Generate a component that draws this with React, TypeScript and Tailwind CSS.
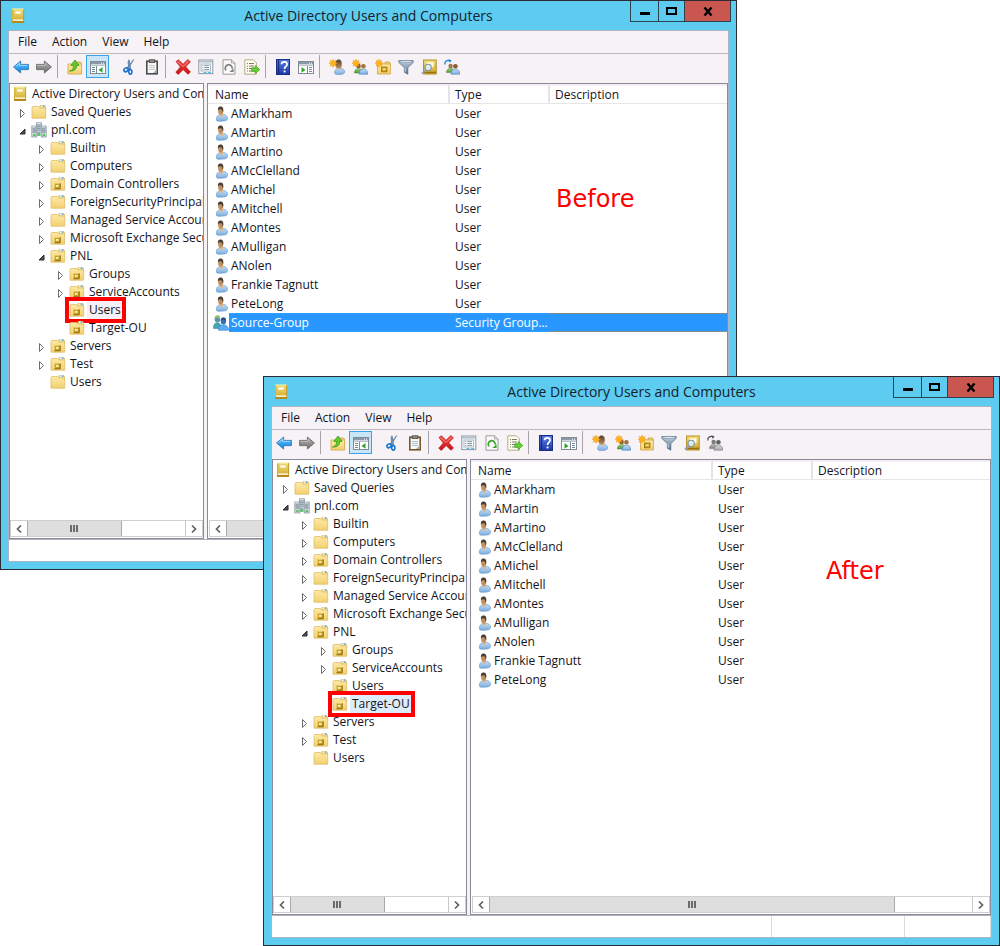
import { Fragment, type ReactNode } from "react";

type IconProps = { className?: string };

function Svg({ children, className = "" }: { children: ReactNode; className?: string }) {
  return (
    <svg viewBox="0 0 16 16" width="16" height="16" aria-hidden="true" className={`block shrink-0 ${className}`}>
      {children}
    </svg>
  );
}

function Gradients() {
  const stops: [string, string, string][] = [
    ["gBlue", "#6ecbff", "#0a7fe0"],
    ["gGrey", "#b4b4b4", "#6f6f6f"],
    ["gFolder", "#fdeaa6", "#f3d071"],
    ["gGold", "#f3df7c", "#d0a526"],
    ["gRed", "#f4504c", "#c80f12"],
    ["gHelp", "#5b7fe6", "#1b38a8"],
    ["gBody", "#c3def8", "#7badde"],
    ["gGreen", "#9fd07a", "#4f9440"],
    ["gSteel", "#c5d3de", "#4f6c85"],
    ["gHead", "#4a3a2c", "#c08f5c"],
  ];
  return (
    <svg width="0" height="0" aria-hidden="true" className="absolute">
      <defs>
        {stops.map(([id, a, b]) => (
          <linearGradient key={id} id={id} x1="0" y1="0" x2="0" y2="1">
            <stop offset="0" stopColor={a} />
            <stop offset="1" stopColor={b} />
          </linearGradient>
        ))}
      </defs>
    </svg>
  );
}

const ConsoleBook = ({ className }: IconProps) => (
  <Svg className={className}>
    <rect x="2" y="1" width="12" height="14" fill="url(#gGold)" />
    <rect x="2" y="1" width="1.500" height="11" fill="#d6b53c" />
    <path d="M2 1h12" stroke="#fbf0a8" strokeWidth="1" />
    <rect x="5" y="3" width="6" height="3" fill="#fffef2" stroke="#e0c65c" strokeWidth=".6" />
    <rect x="3" y="11.400" width="11" height="1.500" fill="#f9f5e0" />
    <rect x="2" y="13" width="12" height="2" fill="#b58a16" />
    <path d="M13.600 1v14" stroke="#b58f22" strokeWidth=".8" />
  </Svg>
);

function Folder({ unit = false }: { unit?: boolean }) {
  return (
    <Svg>
      <path d="M9 1.500h4.600l.9 1v3H9z" fill="#f6dc8c" stroke="#dcb963" strokeWidth=".8" />
      <path d="M1 3.400l.7-.9h6l1 1.500h6v10.200H1z" fill="url(#gFolder)" stroke="#e0bd68" strokeWidth=".8" />
      <rect x="10.200" y="1.400" width="3" height="1.500" fill="#fff" />
      <rect x="11.600" y="1.400" width="1.800" height="1.500" fill="#4aa3e8" />
      {unit && (
        <>
          <path d="M4 7h6.500v6H4z" fill="#c9a12a" />
          <path d="M4.400 13V7.400h6" fill="none" stroke="#f3dc82" strokeWidth=".8" />
          <path d="M10.200 7.400v5.400H4.400" fill="none" stroke="#86680f" strokeWidth=".9" />
          <rect x="6" y="9" width="2.600" height="1.800" fill="#fff3ae" />
        </>
      )}
    </Svg>
  );
}

const Domain = () => (
  <Svg>
    {[
      [5.4, 0.8],
      [0.8, 4],
      [10.2, 4],
    ].map(([x, y]) => (
      <g key={x}>
        <rect x={x} y={y} width="5" height={y < 2 ? 8 : 11} fill="#cdd7de" stroke="#82909b" strokeWidth=".7" />
        <path d={`M${x + 0.8} ${y + 2}h3.4M${x + 0.8} ${y + 4}h3.4M${x + 0.8} ${y + 6}h3.4`} stroke="#5f7382" strokeWidth=".9" />
        <path d={`M${x + 0.6} ${y + 1}h3`} stroke="#f5f9fb" strokeWidth=".8" />
      </g>
    ))}
    <rect x="6" y="9.400" width="3.600" height="4.600" fill="#9dafbb" />
    <path d="M2.200 13.200h2.400M6.800 12.400h2.400M11.600 13.200h2.400" stroke="#3fce3c" strokeWidth="1.800" />
  </Svg>
);

const UserIcon = () => (
  <Svg>
    <path d="M4 15c-1-.8-.8-3.600.4-5 1-1 2-1.200 3-1.500l2.600-.3c2.400.3 4.200 1.600 4.500 3.400.2 1.800-.7 2.800-2 3.100-2.300.5-6.300.7-8.500.3z" fill="url(#gBody)" stroke="#6a9dce" strokeWidth=".7" />
    <path d="M6.800 7.800h3.200l-.4 3-1.500.4-1.300-1.500z" fill="#e0b483" />
    <ellipse cx="7.600" cy="4.800" rx="2.500" ry="4" fill="#c2905c" />
    <path d="M5 4.600C4.400 1.900 5.600.4 7.600.4s3.200 1.600 2.700 4.800L9.800 7C9.400 5.600 9.400 3.800 8 3.300 6.600 3 5.800 3.200 5 4.600z" fill="#4a3f37" />
  </Svg>
);

const GroupIcon = () => (
  <Svg>
    <ellipse cx="4.400" cy="4" rx="2.800" ry="3.600" fill="#5d93b3" />
    <path d="M2 3.600C2 1.200 3.600.4 5 .6s2.600 1.400 2 3.400L4.800 2.800z" fill="#8ac45c" />
    <path d="M.6 13.400c-.6-3.200 1-5.400 3.400-5.600 2.600 0 4.400 1.800 4.600 5.600z" fill="#4aa6ae" stroke="#3b8894" strokeWidth=".6" />
    <ellipse cx="10.400" cy="6" rx="2.700" ry="3.500" fill="#3b70ae" />
    <path d="M7.800 5.600c0-2.600 1.600-3.200 3-3s2.600 1.400 2 3.400l-2.200-1.200z" fill="#2c4f86" />
    <path d="M5.600 15.200c-.6-3.200 1.600-5.200 4.400-5.400 3 0 5.400 1.600 5.600 5.400z" fill="#5aaef7" stroke="#2f7fd0" strokeWidth=".6" />
  </Svg>
);

const Star = () => (
  <path d="M4 0l.9 2.300L7 1.200 6.100 3.400 8.400 4.200 6.100 5 7 7.200 4.900 6.200 4 8.400 3.100 6.200 1 7.200 1.900 5-.2 4.200 1.900 3.400 1 1.200l2.100 1.100z" fill="#ffb21c" stroke="#ee9208" strokeWidth=".4" />
);

const BackArrow = () => (
  <Svg>
    <path d="M.6 8l7-6v3.400h7.800v5.200H7.600V14z" fill="url(#gBlue)" stroke="#2d78b5" strokeWidth=".9" strokeLinejoin="round" />
    <path d="M2.600 7.600l4-3.400v2.200h7.600" fill="none" stroke="#b5e4ff" strokeWidth=".8" />
  </Svg>
);
const ForwardArrow = () => (
  <Svg>
    <path d="M15.400 8l-7-6v3.400H.6v5.200h7.800V14z" fill="url(#gGrey)" stroke="#666" strokeWidth=".9" strokeLinejoin="round" />
    <path d="M1.400 6.400h7.800V4.200" fill="none" stroke="#d0d0d0" strokeWidth=".7" />
  </Svg>
);
const FolderUp = () => (
  <Svg>
    <path d="M9 3h4.500l1 1.200V7H9z" fill="#f3d67d" stroke="#c9a040" strokeWidth=".8" />
    <path d="M1 5h13.600v10H1z" fill="url(#gFolder)" stroke="#cfa544" strokeWidth=".8" />
    <path d="M2.500 12c3.200-.6 4.300-3 3.900-5.600H3.800L8 1l4 5.400H9.600C9.900 9.800 7 12.600 2.500 12z" fill="#5fca2c" stroke="#3b9a1c" strokeWidth=".8" strokeLinejoin="round" />
  </Svg>
);
const TreePane = ({ right = false }: { right?: boolean }) => (
  <Svg>
    <rect x=".5" y="2.500" width="15" height="12" fill="#fff" stroke="#7f8b96" />
    <rect x="1" y="3" width="14" height="2.400" fill="#8999a8" />
    <path d="M11 4.200h1M13 4.200h1" stroke="#fff" />
    <path d="M1 6.500h14" stroke="#b9c3cc" />
    {right ? (
      <>
        <path d="M9.500 7v7.500" stroke="#7f8b96" />
        <path d="M11 8.500h3M11 10.500h3M11 12.500h3" stroke="#71879c" />
        <path d="M3.500 8l4 2.900-4 2.900z" fill="#2fa52a" />
      </>
    ) : (
      <>
        <path d="M6.500 7v7.500" stroke="#7f8b96" />
        <path d="M2 8.500h3M2 10.500h3M2 12.500h3" stroke="#71879c" />
        <path d="M12.500 8l-4 2.900 4 2.900z" fill="#2fa52a" />
      </>
    )}
  </Svg>
);
const Scissors = () => (
  <Svg>
    <path d="M12.600.6L7.400 9.600l-1.600-.4z" fill="#bcd4ea" stroke="#507aa5" strokeWidth=".8" />
    <path d="M8 .8l1.600 8.800-1.500.5L7 3z" fill="#8aa9c6" stroke="#45688c" strokeWidth=".7" />
    <ellipse cx="5" cy="10.800" rx="2.200" ry="1.800" fill="none" stroke="#1673cf" strokeWidth="1.600" transform="rotate(-35 5 10.800)" />
    <ellipse cx="9.300" cy="12.800" rx="1.600" ry="2.300" fill="none" stroke="#1673cf" strokeWidth="1.600" />
  </Svg>
);
const Clipboard = ({ edge, lines }: { edge: string; lines: string }) => (
  <Svg>
    <rect x="2.800" y="2.200" width="10.400" height="12.600" fill="#f8f8f8" stroke={edge} strokeWidth="1.600" />
    <rect x="5.200" y=".8" width="5.600" height="2.800" fill="#8d8d8d" stroke="#474747" strokeWidth=".8" />
    <path d="M5 6.500h6M5 8.500h6M5 10.500h6" stroke={lines} />
    <path d="M9 14l3.500-3.500V14z" fill="#a5adb5" />
  </Svg>
);
const DeleteX = () => (
  <Svg>
    <path d="M1 2.600L3.400.8 8 5.300 12.800.6 15.400 2.800 10.700 7.800 15.400 13 13 15.200 8.100 10.600 3.200 15.400.8 13.200 5.400 8z" fill="url(#gRed)" stroke="#b51015" strokeWidth=".7" strokeLinejoin="round" />
    <path d="M2.300 2.700L8 7.400l5.500-5" fill="none" stroke="#ff9d97" strokeWidth=".8" />
  </Svg>
);
const Properties = () => (
  <Svg>
    <rect x=".8" y="1" width="14" height="13.600" fill="#f7fafc" stroke="#8b98a3" />
    <path d="M1 2.800h13.600" stroke="#a9b8c4" strokeWidth="1.400" />
    <rect x="3" y="5" width="9.500" height="7" fill="#fff" stroke="#9aa8b4" strokeWidth=".8" />
    <path d="M4.300 6.600h1M6.300 6.600H11M4.300 8.500h1M6.300 8.500H11M4.300 10.400h1M6.300 10.400H11" stroke="#71879c" strokeWidth=".9" />
    <path d="M5.500 13.500h3M10 13.500h3" stroke="#4cc3ea" />
  </Svg>
);
const Refresh = ({ green = false }: { green?: boolean }) => {
  const tone = green ? "#3ba52c" : "#808080";
  return (
    <Svg>
      <path d="M2 .8h8.600L14 4v11.200H2z" fill="#fafafa" stroke="#9b9b9b" />
      <path d="M10.500.8V4H14" fill="#e2e2e2" stroke="#9b9b9b" strokeWidth=".8" />
      <path d="M5 11.400A3.500 3.500 0 1 1 11.200 9.600" fill="none" stroke={tone} strokeWidth="1.700" />
      <path d="M12.600 9.200v3.800H8.400z" fill={tone} />
    </Svg>
  );
};
const ExportList = () => (
  <Svg>
    <path d="M.8.8h8.600l3 3v11.400H.8z" fill="#fffdf0" stroke="#b5ab88" />
    <path d="M3 4.500h1M5 4.500h5M3 7h1M5 7h5M3 9.500h1M5 9.500h3M3 12h1M5 12h3" stroke="#7c7b6b" />
    <path d="M7.800 8.800h3.400V6.600L15.800 10.600 11.200 14.600v-2.200H7.800z" fill="#62cf31" stroke="#3d9c1d" strokeWidth=".7" />
  </Svg>
);
const HelpBook = () => (
  <Svg>
    <rect x="1.500" y=".5" width="13" height="15" fill="url(#gHelp)" stroke="#1b2e86" />
    <path d="M3.500 1v14" stroke="#16297c" strokeWidth="1.200" />
    <path d="M6.500 5.200c.2-3.200 5.600-3.200 5.600.1 0 2.100-2.600 2.300-2.600 4.600" fill="none" stroke="#fff" strokeWidth="1.700" />
    <rect x="8.600" y="11.500" width="1.900" height="1.900" fill="#fff" />
  </Svg>
);
const NewUser = () => (
  <Svg>
    <path d="M6 14.800c-1-1.200 0-4.600 2.400-5.600l3.200-.2c2.600.6 4 2.200 4 4 0 1.900-3.200 2.600-5.600 2.600-2 0-3.400-.2-4-.8z" fill="url(#gBody)" stroke="#6a9dce" strokeWidth=".7" />
    <path d="M8.400 8.500h3.200l-.6 3-1.600-1z" fill="#e0b483" />
    <ellipse cx="9.600" cy="4.900" rx="3.200" ry="4.500" fill="url(#gHead)" />
    <Star />
  </Svg>
);
const NewGroup = () => (
  <Svg>
    <circle cx="6.600" cy="7" r="2.200" fill="#8a5d33" />
    <path d="M2.400 14c0-3 1.800-4.600 4.200-4.600S10.800 11 10.800 14z" fill="url(#gGreen)" stroke="#4b8a3c" strokeWidth=".5" />
    <circle cx="11.400" cy="7.200" r="2.300" fill="#a8713f" />
    <path d="M7 15.200c0-3.400 1.800-5.200 4.400-5.200s4.400 1.800 4.400 5.200z" fill="url(#gBody)" stroke="#4f86bd" strokeWidth=".6" />
    <Star />
  </Svg>
);
const NewUnit = () => (
  <Svg>
    <path d="M10 3h4.600l.8 1.500V7H10z" fill="#f3d67d" stroke="#c9a040" strokeWidth=".8" />
    <path d="M2.500 5h12.900v10H2.500z" fill="url(#gFolder)" stroke="#cfa544" strokeWidth=".8" />
    <rect x="6.500" y="8" width="5.500" height="4.800" fill="#d2a41c" stroke="#96700c" strokeWidth=".8" />
    <rect x="7.800" y="9.600" width="3" height="1.200" fill="#fff2ac" />
    <Star />
  </Svg>
);
const Filter = () => (
  <Svg>
    <path d="M.8 1.600h14.400v1.800L9.800 8.600v6.600l-3.400-2V8.600L.8 3.400z" fill="url(#gSteel)" stroke="#54708a" strokeWidth=".8" />
    <ellipse cx="8" cy="2.400" rx="6.400" ry="1" fill="#e4edf4" stroke="#6f8ba3" strokeWidth=".6" />
    <path d="M7.300 8.500v4.300" stroke="#dbe6ee" strokeWidth=".8" />
  </Svg>
);
const Find = () => (
  <Svg>
    <rect x="2.600" y="1" width="12.600" height="14" fill="url(#gGold)" stroke="#ad8619" strokeWidth=".9" />
    <rect x="5.500" y="3.200" width="7" height="5" fill="#fffbe2" />
    <path d="M3 13.400h12" stroke="#957112" strokeWidth="1.400" />
    <circle cx="7.200" cy="8.400" r="3.100" fill="#d8f0fb" fillOpacity=".9" stroke="#8193a0" strokeWidth="1.100" />
    <path d="M5 10.800l-4 3.600" stroke="#8fa3b2" strokeWidth="2" />
  </Svg>
);
const AddToGroup = ({ grey = false }: { grey?: boolean }) => (
  <Svg className={grey ? "grayscale" : ""}>
    <path d="M.8 5.500C.6 2 3.500.4 6 2" fill="none" stroke={grey ? "#555" : "#1c86d6"} strokeWidth="1.300" />
    <path d="M4.200.2L7.600 1.300 5.800 4z" fill={grey ? "#555" : "#1c86d6"} />
    <circle cx="6.600" cy="7" r="2.200" fill="#a1764b" />
    <path d="M2.400 13.600c0-2.800 1.800-4.400 4.200-4.400s4.200 1.600 4.200 4.400z" fill="url(#gGreen)" stroke="#4b8a3c" strokeWidth=".5" />
    <circle cx="11.400" cy="7.200" r="2.300" fill="#8b5b33" />
    <path d="M7 15.200c0-3.400 1.800-5.200 4.400-5.200s4.400 1.800 4.400 5.200z" fill="url(#gBody)" stroke="#4f86bd" strokeWidth=".6" />
  </Svg>
);

type Glyph = "book" | "folder" | "unit" | "domain";
type TreeNode = { label: string; level: 0 | 1 | 2 | 3; glyph: Glyph; state?: "open" | "closed" };

const tree: TreeNode[] = [
  { label: "Active Directory Users and Com", level: 0, glyph: "book" },
  { label: "Saved Queries", level: 1, glyph: "folder", state: "closed" },
  { label: "pnl.com", level: 1, glyph: "domain", state: "open" },
  { label: "Builtin", level: 2, glyph: "folder", state: "closed" },
  { label: "Computers", level: 2, glyph: "folder", state: "closed" },
  { label: "Domain Controllers", level: 2, glyph: "unit", state: "closed" },
  { label: "ForeignSecurityPrincipals", level: 2, glyph: "folder", state: "closed" },
  { label: "Managed Service Accour", level: 2, glyph: "folder", state: "closed" },
  { label: "Microsoft Exchange Secu", level: 2, glyph: "unit", state: "closed" },
  { label: "PNL", level: 2, glyph: "unit", state: "open" },
  { label: "Groups", level: 3, glyph: "unit", state: "closed" },
  { label: "ServiceAccounts", level: 3, glyph: "unit", state: "closed" },
  { label: "Users", level: 3, glyph: "unit" },
  { label: "Target-OU", level: 3, glyph: "unit" },
  { label: "Servers", level: 2, glyph: "unit", state: "closed" },
  { label: "Test", level: 2, glyph: "unit", state: "closed" },
  { label: "Users", level: 2, glyph: "folder" },
];

const people = [
  "AMarkham",
  "AMartin",
  "AMartino",
  "AMcClelland",
  "AMichel",
  "AMitchell",
  "AMontes",
  "AMulligan",
  "ANolen",
  "Frankie Tagnutt",
  "PeteLong",
];

const indent = { 0: "pl-[2px]", 1: "pl-[7px]", 2: "pl-[26px]", 3: "pl-[45px]" };

function NodeIcon({ glyph }: { glyph: Glyph }) {
  if (glyph === "book") return <ConsoleBook />;
  if (glyph === "domain") return <Domain />;
  return <Folder unit={glyph === "unit"} />;
}

function Expander({ node }: { node: TreeNode }) {
  if (node.level === 0) return null;
  if (!node.state) return <span className="w-[14px] shrink-0" />;
  return (
    <button type="button" aria-label={`Toggle ${node.label}`} className="w-[14px] shrink-0">
      <svg viewBox="0 0 10 12" width="10" height="12" aria-hidden="true" className="mt-[3px] block">
        {node.state === "open" ? (
          <path d="M8 3v5H3z" fill="#505050" stroke="#2c2c2c" />
        ) : (
          <path d="M3.500 1.500v8L7.500 5.500z" fill="#fff" stroke="#6d6d6d" />
        )}
      </svg>
    </button>
  );
}

function Tree({ marked, active }: { marked: number; active: boolean }) {
  return (
    <ul className="flex-1 overflow-hidden pt-px">
      {tree.map((node, i) => (
        <li key={i} className={`flex h-[18px] items-center whitespace-nowrap ${indent[node.level]}`}>
          <Expander node={node} />
          <span className="relative flex h-full items-center">
            <NodeIcon glyph={node.glyph} />
            <span
              className={`ml-[2px] px-[2px] leading-[18px] ${
                i === marked ? (active ? "bg-[#dcecfb]" : "bg-[#f5f0f5]") : ""
              }`}
            >
              {node.label}
            </span>
            {i === marked && (
              <span className="absolute -left-1 -right-[3px] -inset-y-[4px] border-4 border-[#fe0000]" />
            )}
          </span>
        </li>
      ))}
    </ul>
  );
}

function Scrollbar({ label, thumb, inset = "" }: { label: string; thumb: string; inset?: string }) {
  return (
    <div role="group" aria-label={label} className={`mb-px flex h-[17px] shrink-0 border border-[#cfcfcf] bg-white ${inset}`}>
      <button type="button" aria-label="Scroll left" className="flex w-4 items-center justify-center">
        <svg viewBox="0 0 8 10" width="8" height="10" aria-hidden="true">
          <path d="M6 1.500L2.500 5 6 8.500" fill="none" stroke="#606060" strokeWidth="1.700" />
        </svg>
      </button>
      <div className="flex flex-1">
        <div className={`flex items-center justify-center gap-px border-x border-[#a9a9a9] bg-[#dedede] ${thumb}`}>
          {[0, 1, 2].map((n) => (
            <span key={n} className="h-[7px] w-[2px] bg-[#6b6b6b]" />
          ))}
        </div>
      </div>
      <button type="button" aria-label="Scroll right" className="flex w-[17px] items-center justify-center border-l border-[#c8c8c8]">
        <svg viewBox="0 0 8 10" width="8" height="10" aria-hidden="true">
          <path d="M2 1.500L5.500 5 2 8.500" fill="none" stroke="#606060" strokeWidth="1.700" />
        </svg>
      </button>
    </div>
  );
}

function ObjectList({ withGroup }: { withGroup: boolean }) {
  const head = "border-b border-t-2 border-b-[#e6e6e6] border-t-[#f3f0f4] p-0 text-left font-normal leading-[17px]";
  const picked = "border-y border-dotted border-[#8a8f90] bg-[#2898ff]";
  return (
    <table className="w-full table-fixed border-separate border-spacing-0">
      <thead>
        <tr className="h-5">
          <th className={`w-[242px] border-r-2 border-r-[#e6e3e7] pl-[7px]! ${head}`}>Name</th>
          <th className={`w-[100px] border-r-2 border-r-[#e6e3e7] pl-[5px]! ${head}`}>Type</th>
          <th className={`pl-[5px]! ${head}`}>Description</th>
        </tr>
      </thead>
      <tbody>
        {people.map((name) => (
          <tr key={name} className="h-[19px]">
            <td className="p-0">
              <div className="flex items-center pl-[5px]">
                <UserIcon />
                <span className="pl-[2px] leading-[19px]">{name}</span>
              </div>
            </td>
            <td className="p-0 pl-[5px] leading-[19px]">User</td>
            <td className="p-0" />
          </tr>
        ))}
        {withGroup && (
          <tr className="h-[19px] text-white">
            <td className="p-0">
              <div className="flex items-center pl-[5px]">
                <GroupIcon />
                <span className={`h-[19px] flex-1 pl-[2px] leading-[17px] ${picked}`}>Source-Group</span>
              </div>
            </td>
            <td className={`p-0 pl-[5px] leading-[17px] ${picked}`}>Security Group...</td>
            <td className={`p-0 ${picked}`} />
          </tr>
        )}
      </tbody>
    </table>
  );
}

type Tool = { name: string; icon: ReactNode; pressed?: boolean };

function Toolbar({ after }: { after: boolean }) {
  const groups: { tools: Tool[]; line: boolean }[] = [
    {
      line: true,
      tools: [
        { name: "Back", icon: <BackArrow /> },
        { name: "Forward", icon: <ForwardArrow /> },
      ],
    },
    {
      line: false,
      tools: [
        { name: "Up one level", icon: <FolderUp /> },
        { name: "Show console tree", icon: <TreePane />, pressed: true },
      ],
    },
    {
      line: true,
      tools: [
        { name: "Cut", icon: <Scissors /> },
        {
          name: "Paste",
          icon: after ? <Clipboard edge="#7d5428" lines="#a9bfd6" /> : <Clipboard edge="#4c4c4c" lines="#c6c6c6" />,
        },
      ],
    },
    {
      line: true,
      tools: [
        { name: "Delete", icon: <DeleteX /> },
        { name: "Properties", icon: <Properties /> },
        { name: "Refresh", icon: <Refresh green={after} /> },
        { name: "Export list", icon: <ExportList /> },
      ],
    },
    {
      line: true,
      tools: [
        { name: "Help", icon: <HelpBook /> },
        { name: "Show action pane", icon: <TreePane right /> },
      ],
    },
    {
      line: false,
      tools: [
        { name: "New user", icon: <NewUser /> },
        { name: "New group", icon: <NewGroup /> },
        { name: "New organizational unit", icon: <NewUnit /> },
        { name: "Filter", icon: <Filter /> },
        { name: "Find", icon: <Find /> },
        { name: "Add to group", icon: <AddToGroup grey={after} /> },
      ],
    },
  ];
  return (
    <div role="toolbar" aria-label="Standard" className="flex h-[29px] items-start bg-[#f6f2f6] pt-px">
      {groups.map((group, i) => (
        <Fragment key={i}>
          {group.tools.map((tool) => (
            <button
              key={tool.name}
              type="button"
              aria-label={tool.name}
              className={`flex h-[23px] w-[23px] items-center justify-center ${
                tool.pressed ? "bg-[#c9e6f8] outline outline-1 -outline-offset-1 outline-[#3ba4e6]" : ""
              }`}
            >
              {tool.icon}
            </button>
          ))}
          <span className="flex h-[23px] w-2 pl-[2px]">{group.line && <span className="w-px bg-[#a5a3a8]" />}</span>
        </Fragment>
      ))}
    </div>
  );
}

function ConsoleWindow({ place, marked, after }: { place: string; marked: number; after: boolean }) {
  return (
    <section
      className={`absolute flex h-[570px] w-[737px] flex-col border border-[#2b2b33] bg-[#5ecbf1] px-[7px] pb-[7px] ${place}`}
    >
      <header className="relative flex h-[29px] shrink-0 items-center justify-center">
        <ConsoleBook className="absolute left-[2px] top-[7px]" />
        <h2 className="text-[14px] leading-[20px] text-[#14222b]">Active Directory Users and Computers</h2>
        <div className="absolute -right-[2px] top-0 flex h-[21px] border-x border-b border-[#2a4450]">
          <button type="button" aria-label="Minimize" className="flex w-[28px] items-center justify-center border-r border-[#2a4450]">
            <span className="mt-1 h-[3px] w-[10px] bg-black" />
          </button>
          <button type="button" aria-label="Maximize" className="flex w-[26px] items-center justify-center border-r border-[#2a4450]">
            <span className="h-2 w-[11px] border-2 border-black" />
          </button>
          <button type="button" aria-label="Close" className="flex w-[45px] items-center justify-center bg-[#c9574f]">
            <svg viewBox="0 0 10 9" width="10" height="9" aria-hidden="true">
              <path d="M1.500 .5L8.500 8.500M8.500 .5L1.500 8.500" stroke="#000" strokeWidth="2.400" />
            </svg>
          </button>
        </div>
      </header>
      <div className="flex min-h-0 flex-1 flex-col border border-[#a9b4c4] bg-[#f6f2f6]">
        <nav aria-label="Menu" className="flex h-[23px] shrink-0 items-center border-b border-[#bcbac0] pl-px">
          {["File", "Action", "View", "Help"].map((item) => (
            <button key={item} type="button" className="pl-2 pr-[7px] leading-[22px]">
              {item}
            </button>
          ))}
        </nav>
        <Toolbar after={after} />
        <div className="flex min-h-0 flex-1 gap-[3px]">
          <div className="flex w-[195px] shrink-0 flex-col overflow-hidden border border-[#8a8a9a] bg-white">
            <Tree marked={marked} active={after} />
            <Scrollbar label="Tree scroll" thumb="w-[60%]" />
          </div>
          <div className="flex min-w-0 flex-1 flex-col border border-[#8a8a9a] bg-white">
            <div className="flex-1">
              <ObjectList withGroup={!after} />
            </div>
            <Scrollbar label="List scroll" thumb="w-[84%]" inset="ml-px" />
          </div>
        </div>
        <footer className="flex h-[22px] shrink-0 border-t border-[#b4b2b8] bg-white">
          <span className="flex-1" />
          <span className="w-[133px] border-l border-[#dcdcdc]" />
          <span className="w-[87px] border-x border-[#dcdcdc]" />
        </footer>
      </div>
    </section>
  );
}

export default function App() {
  return (
    <main className="relative min-h-[946px] overflow-hidden bg-white font-['Open_Sans','Noto_Sans',sans-serif] text-[12px] text-[#14141c]">
      <Gradients />
      <ConsoleWindow place="left-0 top-0" marked={12} after={false} />
      <ConsoleWindow place="left-[263px] top-[376px]" marked={13} after />
      <p className="absolute left-[556px] top-[185px] font-['DejaVu_Sans',sans-serif] text-[24px] leading-[28px] text-[#fe0000]">
        Before
      </p>
      <p className="absolute left-[826px] top-[557px] font-['DejaVu_Sans',sans-serif] text-[24px] leading-[28px] text-[#fe0000]">
        After
      </p>
    </main>
  );
}
